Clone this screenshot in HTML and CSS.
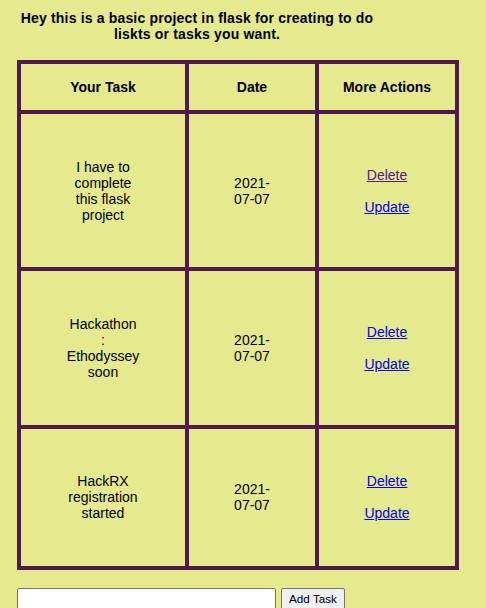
FILE: index.html
```html
<!DOCTYPE html>
<html lang="en">
<head>
<meta charset="utf-8">
<title>Flask To Do</title>
<link rel="stylesheet" href="styles.css">
</head>
<body>
<div class="page">
  <h4 class="intro">Hey this is a basic project in flask for creating to do liskts or tasks you want.</h4>
  <table class="tasks">
    <colgroup>
      <col class="c-task">
      <col class="c-date">
      <col class="c-actions">
    </colgroup>
    <thead>
      <tr>
        <th>Your Task</th>
        <th>Date</th>
        <th>More Actions</th>
      </tr>
    </thead>
    <tbody>
      <tr>
        <td class="task">I have to complete this flask project</td>
        <td class="date">2021-07-07</td>
        <td class="actions"><a href="#" class="visited">Delete</a><a href="#">Update</a></td>
      </tr>
      <tr>
        <td class="task">Hackathon : Ethodyssey soon</td>
        <td class="date">2021-07-07</td>
        <td class="actions"><a href="#">Delete</a><a href="#">Update</a></td>
      </tr>
      <tr>
        <td class="task">HackRX registration started</td>
        <td class="date">2021-07-07</td>
        <td class="actions"><a href="#">Delete</a><a href="#">Update</a></td>
      </tr>
    </tbody>
  </table>
  <form class="add-form">
    <input type="text" class="add-input" name="content">
    <button type="button" class="add-btn">Add Task</button>
  </form>
</div>
</body>
</html>
```
FILE: styles.css
```css
html, body {
  margin: 0;
  padding: 0;
  background: #e6ea8f;
}
body {
  font-family: "Liberation Sans", Arial, sans-serif;
  font-size: 14px;
  line-height: 16px;
  color: #000;
}
.page {
  padding: 10px 0 0 17px;
}
.intro {
  margin: 0 0 18px 0;
  width: 360px;
  font-size: 14px;
  font-weight: bold;
  text-align: center;
  line-height: 16px;
  letter-spacing: 0.17px;
}
.tasks {
  border-collapse: collapse;
  table-layout: fixed;
  width: 442px;
  border: 4px solid #521a4c;
}
.c-task { width: 168px; }
.c-date { width: 130px; }
.c-actions { width: 140px; }
.tasks th,
.tasks td {
  border: 4px solid #521a4c;
  text-align: center;
  vertical-align: middle;
}
.tasks th {
  padding: 15px 0;
  font-weight: bold;
}
.tasks td {
  padding: 44.67px 0;
}
.tasks td.task {
  padding-left: 45px;
  padding-right: 45px;
}
.tasks td.date {
  padding-left: 43px;
  padding-right: 43px;
}
.actions a {
  display: block;
  color: #0000ee;
  text-decoration: underline;
}
.actions a + a {
  margin-top: 16px;
}
.actions a.visited {
  color: #551a8b;
}
.add-form {
  margin: 18px 0 0 0;
  display: flex;
  align-items: flex-start;
  gap: 5px;
}
.add-input {
  box-sizing: border-box;
  width: 259px;
  height: 22px;
  margin: 0;
  padding: 1px 2px;
  border: 1px solid #767676;
  border-radius: 2px;
  background: #fff;
}
.add-btn {
  box-sizing: border-box;
  width: 64px;
  height: 22px;
  margin: 0;
  padding: 0;
  border: 1px solid #767676;
  border-radius: 2px;
  background: #efefef;
  font-family: "Liberation Sans", Arial, sans-serif;
  font-size: 11.7px;
  color: #000;
}
```
